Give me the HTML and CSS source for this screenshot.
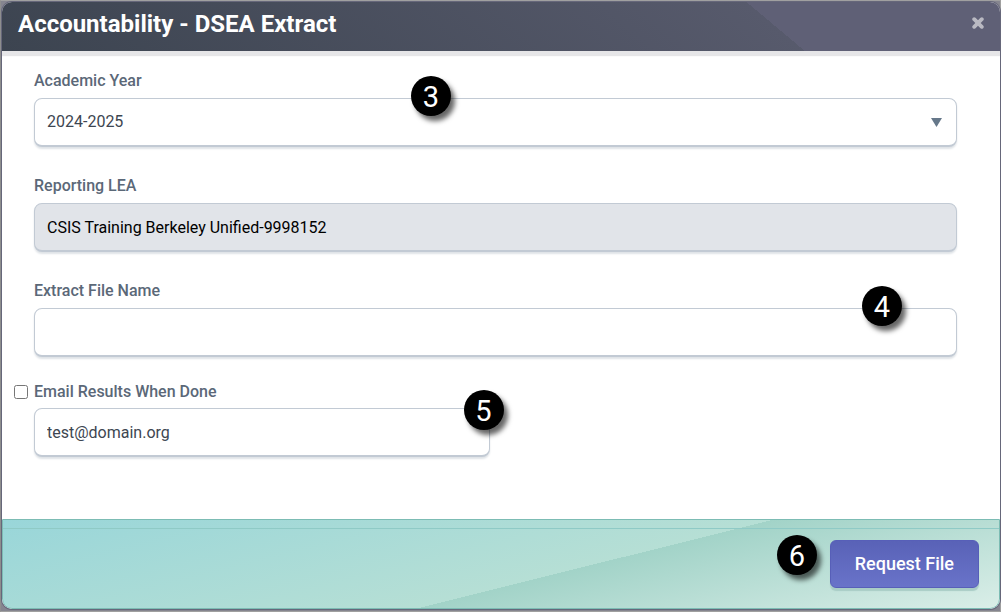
FILE: index.html
```html
<!DOCTYPE html>
<html lang="en">
<head>
<meta charset="utf-8">
<meta name="viewport" content="width=device-width, initial-scale=1">
<title>Accountability - DSEA Extract</title>
<link rel="stylesheet" href="styles.css">
</head>
<body>
<div class="frame">
  <main class="dialog" role="dialog" aria-labelledby="dialog-title">
    <header class="dialog-header">
      <h1 class="dialog-title" id="dialog-title">Accountability - DSEA Extract</h1>
      <button class="close" type="button" aria-label="Close">
        <svg width="12" height="12" viewBox="0 0 12 12" aria-hidden="true"><path d="M2.2 2.2 L9.8 9.8 M9.8 2.2 L2.2 9.8" stroke="currentColor" stroke-width="3.8" stroke-linecap="round"/></svg>
      </button>
    </header>
    <form class="form">
      <div class="dialog-body">
        <div class="field">
          <label class="label" for="year">Academic Year</label>
          <div class="control">
            <select class="input" id="year"><option>2024-2025</option></select>
            <svg class="arrow" width="11" height="9" viewBox="0 0 11 9" aria-hidden="true"><path d="M0 0H11L5.5 9Z" fill="#66788a"/></svg>
            <span class="badge badge-year">3</span>
          </div>
        </div>
        <div class="field">
          <label class="label" for="lea">Reporting LEA</label>
          <input class="input input-readonly" id="lea" type="text" value="CSIS Training Berkeley Unified-9998152" readonly>
        </div>
        <div class="field">
          <label class="label" for="file">Extract File Name</label>
          <div class="control">
            <input class="input" id="file" type="text">
            <span class="badge badge-file">4</span>
          </div>
        </div>
        <div class="field field-email">
          <div class="check-row">
            <input class="check" id="email-results" type="checkbox">
            <label class="label" for="email-results">Email Results When Done</label>
          </div>
          <div class="control">
            <input class="input" type="email" value="test@domain.org" aria-label="Email address">
            <span class="badge badge-email">5</span>
          </div>
        </div>
      </div>
      <footer class="dialog-footer">
        <div class="control">
          <button class="submit" type="button">Request File</button>
          <span class="badge badge-submit">6</span>
        </div>
      </footer>
    </form>
  </main>
</div>
</body>
</html>
```
FILE: styles.css
```css
* { box-sizing: border-box; }

body {
  margin: 0;
  background: #fff;
  font-family: Roboto, sans-serif;
  font-size: 16px;
  line-height: 20px;
}

.frame {
  margin-right: 1px;
  padding: 1px 0 2px 1px;
  background: #85858f;
  border: 1px solid #a0a0a0;
  border-left-color: #8e8e8e;
}

.dialog {
  overflow: hidden;
  background: #fff;
  border-radius: 10px;
  box-shadow: 0 0 0 1px #66677a;
}

.dialog-header {
  position: relative;
  display: flex;
  align-items: center;
  justify-content: space-between;
  height: 49px;
  padding: 0 16px;
  color: #fff;
  background: linear-gradient(40deg, #3c4450 0%, #575a6c 76%, #5f6076 76%);
  box-shadow: 0 5px 1px #e6e6e8;
}

.dialog-title {
  margin: 0;
  padding-bottom: 6px;
  font-size: 24px;
  font-weight: 700;
  line-height: 28px;
}

.close {
  display: flex;
  margin-bottom: 8px;
  padding: 0;
  border: 0;
  background: none;
  color: #b9b9c2;
}

.dialog-body {
  display: flex;
  flex-direction: column;
  gap: 29px;
  padding: 20px 43px 62px 32px;
}

.field {
  display: flex;
  flex-direction: column;
  gap: 7px;
}

.label {
  color: #5b6878;
  font-weight: 500;
}

.control { position: relative; }

.input {
  display: block;
  width: 100%;
  height: 49px;
  padding: 0 12px;
  appearance: none;
  border: 1px solid #c2cad4;
  border-bottom-width: 2px;
  border-radius: 8px;
  background: #fff;
  box-shadow: 0 2px 2px #dfe3e7;
  color: #3d4651;
  font: 400 16px/20px Roboto, sans-serif;
}

.input-readonly {
  background: #e1e4e9;
  color: #000;
}

.arrow {
  position: absolute;
  top: 20px;
  right: 15px;
  pointer-events: none;
}

.field-email {
  gap: 6px;
  width: 50%;
  margin-top: -4px;
  padding-right: 6px;
}

.check-row {
  display: flex;
  align-items: center;
  gap: 6px;
  margin-left: -20px;
}

.check {
  width: 14px;
  height: 14px;
  margin: 0;
}

.dialog-footer {
  display: flex;
  align-items: center;
  justify-content: flex-end;
  height: 90px;
  padding: 0 20px;
  border: 1px solid #7cbcb4;
  border-radius: 0 0 10px 10px;
  background:
    linear-gradient(#8fcac6, #8fcac6) 0 8px / 100% 1px no-repeat,
    linear-gradient(166deg, #99d6d9 0%, #b6dfd5 57%, #a2d3c8 57%, #daeee8 100%);
}

.submit {
  display: block;
  height: 48px;
  padding: 0 24px;
  border: 1px solid #575fb8;
  border-radius: 6px;
  background: linear-gradient(#5962b7, #6973c9);
  box-shadow: 0 3px 1px #a9cdc6;
  color: #fff;
  font: 500 18px/24px Roboto, sans-serif;
}

.badge {
  position: absolute;
  width: 40px;
  height: 40px;
  border-radius: 50%;
  background: #000;
  box-shadow: 4px 5px 5px rgba(0, 0, 0, 0.6);
  color: #fff;
  font: 400 29px/42px Roboto, sans-serif;
  text-align: center;
}

.badge-year { top: -22px; left: 377px; }
.badge-file { top: -22px; right: 55px; }
.badge-email { top: -18px; right: -14px; }
.badge-submit { top: -5px; right: 162px; }
```
